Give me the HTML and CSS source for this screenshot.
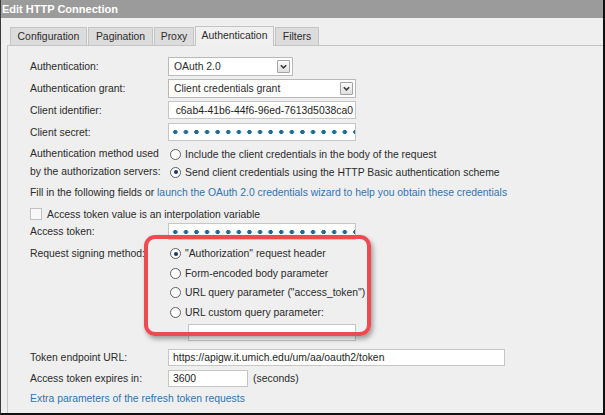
FILE: index.html
```html
<!DOCTYPE html>
<html lang="en">
<head>
  <meta charset="UTF-8">
  <title>Edit HTTP Connection</title>
  <link rel="stylesheet" href="styles.css">
</head>
<body>
  <div class="dialog">
    <div class="titlebar">Edit HTTP Connection</div>
    <div class="dialog-body">
      <div class="tabs">
        <div class="tab tab-config">Configuration</div>
        <div class="tab tab-paging">Pagination</div>
        <div class="tab tab-proxy">Proxy</div>
        <div class="tab tab-auth active">Authentication</div>
        <div class="tab tab-filters">Filters</div>
      </div>

      <div class="panel">
        <div class="row row-auth">
          <span class="field-label">Authentication:</span>
          <div class="select select-short">
            <span class="select-value">OAuth 2.0</span>
            <span class="select-btn">
              <svg width="11" height="11" viewBox="0 0 11 11"><path d="M2.8 4.2 L5.5 6.9 L8.2 4.2" fill="none" stroke="#3c3c3c" stroke-width="1.6"/></svg>
            </span>
          </div>
        </div>
        <div class="row row-grant">
          <span class="field-label">Authentication grant:</span>
          <div class="select select-wide">
            <span class="select-value">Client credentials grant</span>
            <span class="select-btn">
              <svg width="11" height="11" viewBox="0 0 11 11"><path d="M2.8 4.2 L5.5 6.9 L8.2 4.2" fill="none" stroke="#3c3c3c" stroke-width="1.6"/></svg>
            </span>
          </div>
        </div>
        <div class="row row-id">
          <span class="field-label">Client identifier:</span>
          <div class="input input-wide input-end"><span>c6ab4-41b6-44f6-96ed-7613d5038ca0</span></div>
        </div>
        <div class="row row-secret">
          <span class="field-label">Client secret:</span>
          <div class="input input-wide input-dots"></div>
        </div>

        <div class="method">
          <div class="field-label method-label">Authentication method used<br>by the authorization servers:</div>
          <div class="choices">
            <div class="choice"><span class="radio"></span>Include the client credentials in the body of the request</div>
            <div class="choice"><span class="radio checked"></span>Send client credentials using the HTTP Basic authentication scheme</div>
          </div>
        </div>

        <p class="fill-note">Fill in the following fields or <a class="link" href="#">launch the OAuth 2.0 credentials wizard to help you obtain these credentials</a></p>

        <div class="check-row"><span class="checkbox"></span>Access token value is an interpolation variable</div>

        <div class="row row-token">
          <span class="field-label">Access token:</span>
          <div class="input input-wide input-dots"></div>
        </div>

        <div class="signing">
          <span class="field-label signing-label">Request signing method:</span>
          <div class="choices signing-choices">
            <div class="choice"><span class="radio checked"></span>"Authorization" request header</div>
            <div class="choice"><span class="radio"></span>Form-encoded body parameter</div>
            <div class="choice"><span class="radio"></span>URL query parameter ("access_token")</div>
            <div class="choice"><span class="radio"></span>URL custom query parameter:</div>
            <div class="input input-custom"></div>
          </div>
        </div>

        <div class="row row-url">
          <span class="field-label">Token endpoint URL:</span>
          <div class="input input-url"><span>https://apigw.it.umich.edu/um/aa/oauth2/token</span></div>
        </div>
        <div class="row row-expires">
          <span class="field-label">Access token expires in:</span>
          <div class="input input-expires"><span>3600</span></div>
          <span class="unit">(seconds)</span>
        </div>

        <a class="link extra-link" href="#">Extra parameters of the refresh token requests</a>

        <!-- annotation drawn over the signing options -->
        <div class="callout"></div>
      </div>
    </div>
  </div>
</body>
</html>
```

FILE: styles.css
```css
html, body, p {
  margin: 0;
  padding: 0;
}

body {
  background: #efefef;
  font-family: "Liberation Sans", Arial, sans-serif;
  font-size: 10.4px;
  color: #2b2b2b;
}

.dialog {
  width: 605px;
  height: 415px;
  box-sizing: border-box;
  border-left: 1px solid #3a3a3a;
  border-right: 2px solid #111;
  border-bottom: 2px solid #111;
  background: #efefef;
  display: flex;
  flex-direction: column;
  overflow: hidden;
}

.titlebar {
  height: 18px;
  line-height: 18px;
  padding-left: 1px;
  background: #9b9b9b;
  color: #fff;
  font-size: 11px;
  font-weight: bold;
}

.dialog-body {
  flex: 1;
  display: flex;
  flex-direction: column;
  padding: 9px 0 0 6px;
}

/* tabs */
.tabs {
  display: flex;
  align-items: flex-end;
  height: 18px;
  padding-left: 3px;
}
.tab {
  box-sizing: border-box;
  height: 18px;
  line-height: 17px;
  text-align: center;
  border: 1px solid #c4c4c4;
  border-bottom: 0;
  background: #dcdcdc;
  margin-right: 1px;
}
.tab-config { width: 77px; }
.tab-paging { width: 65px; }
.tab-proxy { width: 40px; }
.tab-auth { width: 79px; }
.tab-filters { width: 44px; }
.tab.active {
  height: 20px;
  margin-bottom: -1px;
  background: #f0f0f0;
  position: relative;
  z-index: 1;
}

.panel {
  flex: 1;
  position: relative;
  border-top: 1px solid #c4c4c4;
  border-left: 1px solid #c8c8c8;
  padding: 11px 0 0 22px;
}

/* form rows */
.row {
  display: flex;
  align-items: center;
}
.field-label {
  width: 138px;
  flex-shrink: 0;
}
.row-auth { height: 19px; margin-bottom: 3px; }
.row-grant { height: 19px; margin-bottom: 3px; }
.row-id { height: 18px; margin-bottom: 4px; }
.row-secret { height: 18px; }

.select {
  box-sizing: border-box;
  height: 19px;
  display: flex;
  align-items: center;
  justify-content: space-between;
  background: #fff;
  border: 1px solid #b9b9b9;
  padding: 0 2px 0 5px;
}
.select-short { width: 125px; }
.select-wide { width: 188px; }
.select-btn {
  box-sizing: border-box;
  width: 13px;
  height: 13px;
  display: flex;
  align-items: center;
  justify-content: center;
  border: 1px solid #a2a2a2;
  border-radius: 1px;
  background: linear-gradient(#fdfdfd, #dedede);
}

.input {
  box-sizing: border-box;
  height: 100%;
  display: flex;
  align-items: center;
  background: #fff;
  border: 1px solid #c6c6c6;
  padding: 0 4px;
  color: #1e1e1e;
  overflow: hidden;
  white-space: nowrap;
}
.input-wide { width: 188px; }
.input-end {
  justify-content: flex-end;
  padding-right: 2px;
}
.input-dots {
  background: #fff radial-gradient(circle, #1c6b9b 1.9px, transparent 2.4px) 1px 50% / 10.6px 10px repeat-x;
}

/* radio groups */
.method {
  display: flex;
  margin-top: 4px;
}
.method-label {
  line-height: 18px;
}
.choices {
  display: flex;
  flex-direction: column;
}
.choice {
  display: flex;
  align-items: center;
  height: 18px;
  white-space: nowrap;
}
.radio {
  box-sizing: border-box;
  width: 11px;
  height: 11px;
  margin: 0 4px 0 2px;
  border-radius: 50%;
  border: 1px solid #5f5f5f;
  background: #fff;
  display: flex;
  align-items: center;
  justify-content: center;
}
.radio.checked::after {
  content: "";
  width: 4px;
  height: 4px;
  border-radius: 50%;
  background: #1d3560;
}

.fill-note {
  margin-top: 5px;
  line-height: 14px;
  white-space: nowrap;
}
.link {
  color: #2f74b2;
  text-decoration: none;
}

.check-row {
  display: flex;
  align-items: center;
  height: 16px;
  margin-top: 6px;
}
.checkbox {
  box-sizing: border-box;
  width: 12px;
  height: 12px;
  margin-right: 5px;
  border: 1px solid #c2c2c2;
  background: #f8f8f8;
}

.row-token {
  height: 17px;
  margin-top: 1px;
}

.signing {
  display: flex;
  margin-top: 4px;
}
.signing-label {
  line-height: 19.5px;
}
.signing-choices .choice {
  height: 19.5px;
}
.input-custom {
  width: 168px;
  height: 17px;
  margin: 2px 0 0 20px;
}

.row-url {
  height: 17px;
  margin-top: 8px;
}
.input-url { width: 337px; }
.row-expires {
  height: 17px;
  margin-top: 4px;
}
.input-expires { width: 80px; }
.unit { margin-left: 5px; }

.extra-link {
  display: block;
  width: max-content;
  margin-top: 5px;
  line-height: 14px;
}

.callout {
  position: absolute;
  left: 136px;
  top: 189px;
  width: 227px;
  height: 101px;
  box-sizing: border-box;
  border: 4px solid #ef4a50;
  border-radius: 11px;
  box-shadow: 2px 3px 5px rgba(0, 0, 0, 0.35);
  pointer-events: none;
}
```
